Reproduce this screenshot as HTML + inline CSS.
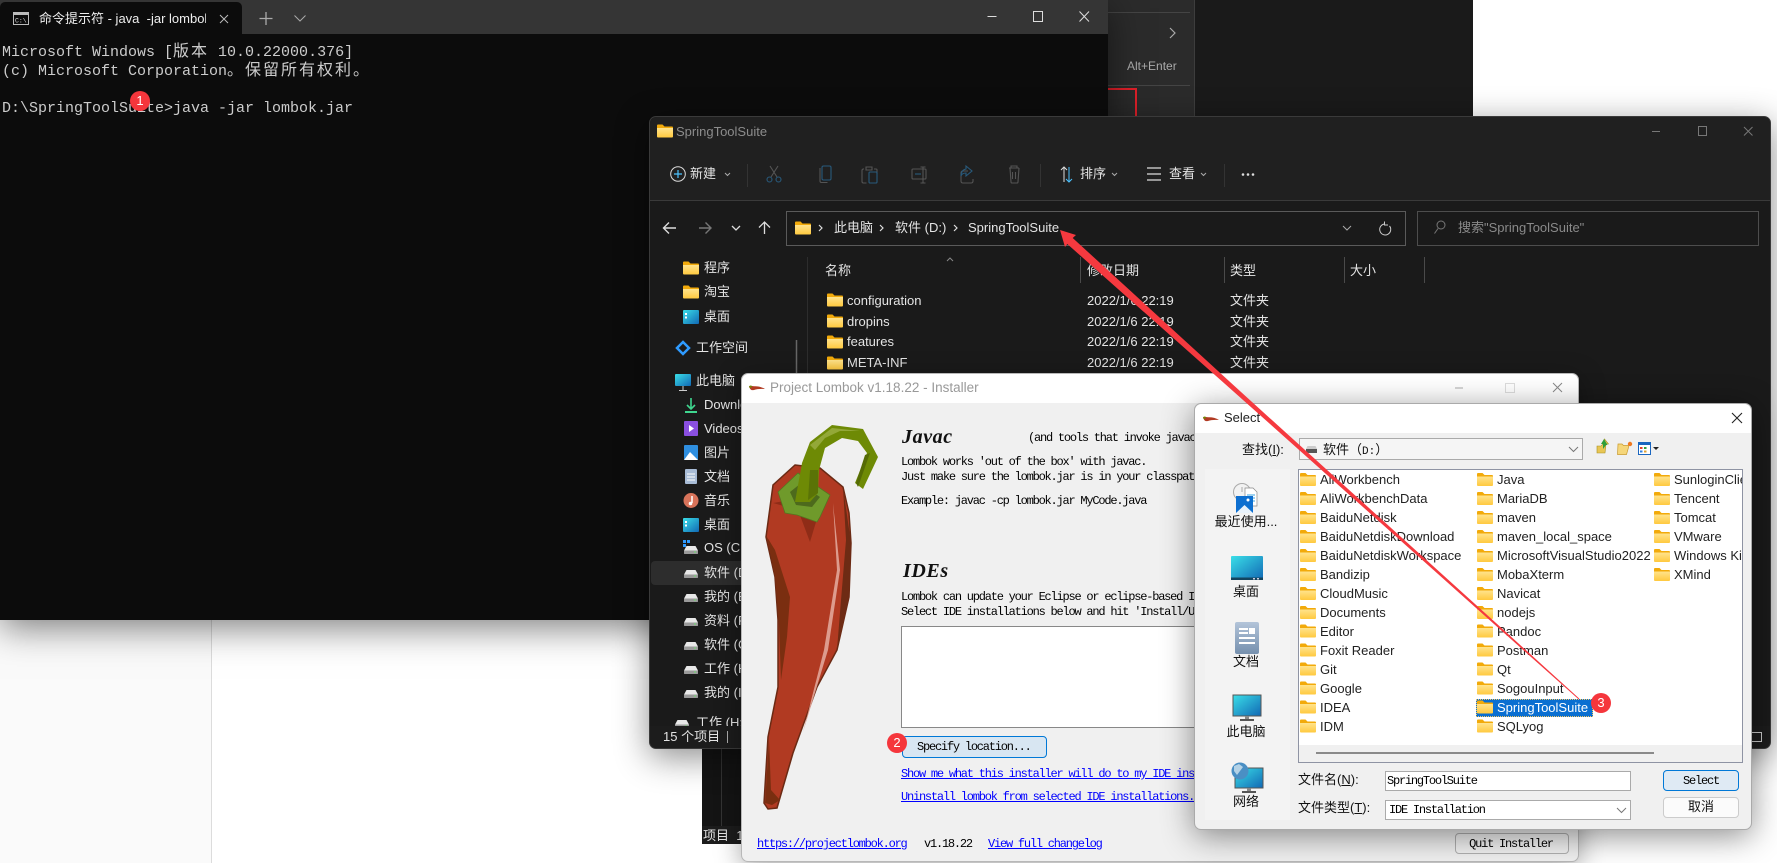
<!DOCTYPE html>
<html><head><meta charset="utf-8"><title>Lombok</title>
<style>
html,body{margin:0;padding:0;background:#fff}
body{position:relative;width:1777px;height:863px;overflow:hidden;font-family:"Liberation Sans","Noto Sans CJK SC",sans-serif;font-size:13px}
.b{position:absolute;box-sizing:border-box}
.t{position:absolute;white-space:nowrap;line-height:20px;margin-top:-10px}
.c{transform:translateX(-50%)}
.m{font-family:"Liberation Mono","Noto Sans CJK SC",monospace;font-size:12px;letter-spacing:-1.22px;color:#000}
.l{color:#00f;text-decoration:underline}
.e{color:#e4e4e4}
.d{color:#222}
.term{font-family:"Liberation Mono","Noto Sans CJK SC",monospace;font-size:15px;color:#cccccc}
.term span{font-size:16px;letter-spacing:2px}
.clip{position:absolute;left:0;top:0;width:1777px;height:863px}
svg{position:absolute;left:0;top:0;overflow:visible}
.badge{position:absolute;width:20px;height:20px;border-radius:50%;background:#f5363c;color:#fff;font-size:13px;line-height:20px;text-align:center}
</style></head><body>
<svg width="0" height="0" style="position:absolute"><defs>
<linearGradient id="fg" x1="0" y1="0" x2="0" y2="1"><stop offset="0" stop-color="#ffe38c"/><stop offset="1" stop-color="#ffc93f"/></linearGradient>
<linearGradient id="dg" x1="0" y1="0" x2="1" y2="1"><stop offset="0" stop-color="#3adfe8"/><stop offset="1" stop-color="#1168b4"/></linearGradient>
<linearGradient id="dc" x1="0" y1="0" x2="0" y2="1"><stop offset="0" stop-color="#b3c4d9"/><stop offset="1" stop-color="#7590ae"/></linearGradient>
<symbol id="f" viewBox="0 0 16 14"><path d="M0 1.5Q0 .5 1 .5h4.5l2 2H15q1 0 1 1V5H0z" fill="#f2aa0a"/><path d="M0 4h16v8.5q0 1-1 1H1q-1 0-1-1z" fill="url(#fg)"/></symbol>
<symbol id="drv" viewBox="0 0 14 10"><path d="M2.5 1h9L14 5.5H0z" fill="#e8e8e8"/><rect x="0" y="5.5" width="14" height="3.5" rx=".6" fill="#9a9a9a"/><rect x="10" y="6.5" width="2" height="1" fill="#6fe06f"/></symbol>
<symbol id="chili" viewBox="0 0 16 6"><path d="M0 1.5Q1 0 3 1l2 .3Q11 1 16 4 9 3.6 5 5 2 5.6 1 3.6z" fill="#b13a22"/><path d="M0 1.5Q1 0 3 1L2.6 2.6 0 2.4z" fill="#6e8a05"/></symbol>
<symbol id="dsk" viewBox="0 0 16 16"><rect y="1" width="16" height="14" rx="1" fill="url(#dg)"/><rect x="2" y="4" width="2" height="2" fill="#fff"/><rect x="2" y="7.5" width="2" height="2" fill="#fff"/></symbol>
</defs></svg>

<!-- background behind windows -->
<div class="b" style="left:0;top:620px;width:211px;height:243px;background:#fafafa"></div>
<div class="b" style="left:211px;top:620px;width:1px;height:243px;background:#dcdcdc"></div>
<div class="b" style="left:1108px;top:0;width:365px;height:120px;background:#1a1a1a"></div>
<div class="b" style="left:1108px;top:0;width:87px;height:120px;background:#2b2b2b;border-right:1px solid #3d3d3d"></div>
<div class="b" style="left:1108px;top:12px;width:82px;height:1px;background:#444"></div>
<div class="b" style="left:1108px;top:85px;width:82px;height:1px;background:#444"></div>
<div class="t" style="left:1127px;top:66px;color:#aaa;font-size:12px">Alt+Enter</div>
<svg width="1777" height="863"><path d="M1170 28l5 5-5 5" fill="none" stroke="#aaa" stroke-width="1.2"/></svg>
<div class="b" style="left:1107px;top:88px;width:30px;height:32px;border-top:2px solid #e0202a;border-right:2px solid #e0202a"></div>
<div class="b" style="left:702px;top:740px;width:45px;height:104px;background:#141414"></div>
<div class="b" style="left:721px;top:740px;width:1px;height:86px;background:#333"></div>
<div class="b" style="left:702px;top:826px;width:45px;height:18px;background:#1c1c1c"></div>
<div class="t e" style="left:703px;top:836px">项目 &nbsp;1</div>

<!-- terminal -->
<div class="b" style="left:0;top:0;width:1108px;height:620px;background:#0c0c0c;box-shadow:0 8px 34px rgba(0,0,0,.5)"></div>
<div class="b" style="left:0;top:0;width:1108px;height:34px;background:#353535"></div>
<div class="b" style="left:0;top:2px;width:242px;height:32px;background:#0c0c0c;border-radius:5px 5px 0 0"></div>
<svg width="1777" height="863">
<rect x="13.500" y="12.500" width="15" height="12" fill="#0c0c0c" stroke="#bbb"/><rect x="13.500" y="12.500" width="15" height="2.500" fill="#bbb"/>
<text x="15" y="22.500" font-family="Liberation Mono" font-size="6.500" fill="#ddd">C:\</text>
<path d="M220 15l8 8M228 15l-8 8" stroke="#bbb" fill="none"/>
<path d="M266 12v13M259.500 18.500h13" stroke="#aaa" stroke-width="1.300" fill="none"/>
<path d="M294.500 15.500l5.500 5.500 5.500-5.500" stroke="#aaa" fill="none"/>
<path d="M987.500 16.500h9" stroke="#ddd"/><rect x="1033.500" y="11.500" width="9" height="10" fill="none" stroke="#ddd"/>
<path d="M1079.500 11.500l9.500 10M1089 11.500l-9.500 10" stroke="#ddd" fill="none"/>
</svg>
<div class="t" style="left:39px;top:19px;width:167px;overflow:hidden;color:#eee;font-size:13px">命令提示符 - java &nbsp;-jar lombok.jar</div>
<div class="t term" style="left:2px;top:52px">Microsoft Windows [<span>版本</span> 10.0.22000.376]</div>
<div class="t term" style="left:2px;top:71px">(c) Microsoft Corporation<span>。保留所有权利。</span></div>
<div class="t term" style="left:2px;top:109px">D:\SpringToolSuite&gt;java -jar lombok.jar</div>

<!-- explorer -->
<div class="b" style="left:649px;top:116px;width:1122px;height:633px;background:#1a1a1a;border-radius:7px;border:1px solid #3a3a3a;box-shadow:0 8px 34px rgba(0,0,0,.45)"></div>
<div class="b" style="left:650px;top:117px;width:1120px;height:83px;background:#202020;border-radius:7px 7px 0 0"></div>
<div class="b" style="left:650px;top:200px;width:1120px;height:1px;background:#3a3a3a"></div>
<div class="t" style="left:676px;top:132px;color:#8c8c8c">SpringToolSuite</div>
<div class="t e" style="left:690px;top:174px">新建</div>
<div class="t e" style="left:1080px;top:174px">排序</div>
<div class="t e" style="left:1169px;top:174px">查看</div>
<div class="b" style="left:786px;top:211px;width:620px;height:35px;border:1px solid #5a5a5a"></div>
<div class="b" style="left:1417px;top:211px;width:342px;height:35px;border:1px solid #4d4d4d"></div>
<div class="t e" style="left:834px;top:228px">此电脑</div>
<div class="t e" style="left:895px;top:228px">软件 (D:)</div>
<div class="t e" style="left:968px;top:228px">SpringToolSuite</div>
<div class="t" style="left:1458px;top:228px;color:#8a8a8a">搜索"SpringToolSuite"</div>
<svg width="1777" height="863">
<use href="#f" x="657" y="124" width="16" height="14"/>
<path d="M1652 131.500h8" stroke="#777"/><rect x="1698.500" y="126.500" width="8" height="9" fill="none" stroke="#777"/><path d="M1744 127l8.500 8.500M1752.500 127l-8.500 8.500" stroke="#777" fill="none"/>
<circle cx="678" cy="174" r="7.300" fill="none" stroke="#ddd"/><path d="M678 170v8M674 174h8" stroke="#4cc2ff" stroke-width="1.200"/>
<path d="M725 173l2.500 2.500 2.500-2.500M1112 173l2.500 2.500 2.500-2.500M1201 173l2.500 2.500 2.500-2.500" stroke="#aaa" fill="none"/>
<path d="M747.500 164v23M1040.500 164v23M1224.500 164v23" stroke="#333"/>
<g fill="none" stroke="#555" stroke-width="1.100">
<path d="M770 166l7 11M778 166l-7 11"/>
<path d="M820 168v13a1.500 1.500 0 0 0 1.500 1.500h6"/>
<path d="M864 169h-0.500q-1.500 0-1.500 1.500v11q0 1.500 1.500 1.500h3M874 169h2q1 0 1 1v4M866 167h6v3h-6z"/>
<path d="M923 167v16M920.500 167h5M920.500 183h5"/>
<path d="M968 171h-5q-2 0-2 2v8q0 2 2 2h8q2 0 2-2v-2"/>
<path d="M1009 168h10M1011 168v-2h6v2M1010 168l1 14q0 1 1 1h5q1 0 1-1l1-14M1012.500 172v7M1015.500 172v7"/>
</g>
<g fill="none" stroke="#285a7c" stroke-width="1.100">
<circle cx="769.500" cy="179.500" r="2.500"/><circle cx="778.500" cy="179.500" r="2.500"/>
<rect x="822" y="166" width="9" height="14" rx="1.500"/>
<rect x="869" y="172" width="8" height="11" rx="1"/>
<rect x="912" y="169" width="14" height="10" rx="1" stroke="#555"/><path d="M915 174h6"/>
<path d="M966 166l6 5-6 5v-3q-4 0-5 3 0-6 5-7z"/>
</g>
<path d="M1064 167v15M1061 170l3-3 3 3" stroke="#ddd" fill="none"/><path d="M1069 167v15M1066 179l3 3 3-3" stroke="#4cc2ff" fill="none"/>
<path d="M1147 168h14M1147 174h14M1147 180h14" stroke="#ddd" stroke-width="1.200"/>
<circle cx="1243" cy="174.500" r="1.300" fill="#ddd"/><circle cx="1248" cy="174.500" r="1.300" fill="#ddd"/><circle cx="1253" cy="174.500" r="1.300" fill="#ddd"/>
<path d="M676 228h-12M669 222.500l-5.500 5.500 5.500 5.500" stroke="#ddd" stroke-width="1.400" fill="none"/>
<path d="M699 228h12M705.500 222.500l5.500 5.500-5.500 5.500" stroke="#777" stroke-width="1.400" fill="none"/>
<path d="M732 226l4 4 4-4" stroke="#ddd" stroke-width="1.300" fill="none"/>
<path d="M764.500 234v-12M759 227.500l5.500-5.500 5.500 5.500" stroke="#ddd" stroke-width="1.300" fill="none"/>
<use href="#f" x="795" y="221" width="16" height="14"/>
<path d="M819 225l3 3-3 3M880 225l3 3-3 3M954 225l3 3-3 3" stroke="#ddd" stroke-width="1.200" fill="none"/>
<path d="M1343 226l4 4 4-4" stroke="#aaa" fill="none"/>
<path d="M1389.500 226a5.500 5.500 0 1 1-5-2M1384.500 221.500v3.500h3.500" stroke="#ccc" fill="none"/>
<circle cx="1441" cy="225" r="4" fill="none" stroke="#777"/><path d="M1438 228.500l-3.500 5" stroke="#777"/>
<path d="M947 261l3-3 3 3" stroke="#888" fill="none"/>
<path d="M807.500 257v120" stroke="#2d2d2d"/><path d="M796.500 340v40" stroke="#666" stroke-width="1.500"/>
<path d="M1080.500 257v26M1224.500 257v26M1344.500 257v26M1424.500 257v26" stroke="#4a4a4a"/>
<use href="#f" x="827" y="293" width="16" height="14"/><use href="#f" x="827" y="314" width="16" height="14"/><use href="#f" x="827" y="335" width="16" height="14"/><use href="#f" x="827" y="356" width="16" height="14"/>
<use href="#f" x="683" y="261" width="16" height="14"/><use href="#f" x="683" y="285" width="16" height="14"/><use href="#dsk" x="683" y="309" width="16" height="16"/>
<path d="M683 342l6 6-6 6-6-6z" fill="none" stroke="#2f9bff" stroke-width="2.500"/>
<rect x="675" y="374" width="16" height="12" rx="1" fill="url(#dg)"/><path d="M683 386v4M679 390.500h8" stroke="#ccc"/>
<path d="M691 398v11M687 405l4 4 4-4" stroke="#3fd68f" stroke-width="1.600" fill="none"/><path d="M685 412h12" stroke="#3fd68f" stroke-width="2"/>
<rect x="684" y="421" width="14" height="15" rx="1" fill="#8a4fe0"/><path d="M689 425v7l5-3.500z" fill="#fff"/>
<rect x="684" y="445" width="14" height="15" rx="1" fill="#2f8fe0"/><path d="M684 460l6-8 8 8z" fill="#fff"/>
<rect x="685" y="469" width="12" height="15" rx="1" fill="#a8bcd6"/><path d="M687 474h8M687 477h8M687 480h8" stroke="#fff"/>
<circle cx="691" cy="500.500" r="7.500" fill="#d8735a"/><path d="M692 496v7" stroke="#fff" stroke-width="1.500"/><circle cx="690.500" cy="503.500" r="1.800" fill="#fff"/>
<use href="#dsk" x="683" y="517" width="16" height="16"/>
<rect x="683" y="540" width="3" height="3" fill="#2f9bff"/><rect x="687" y="540" width="3" height="3" fill="#2f9bff"/><rect x="683" y="544" width="3" height="3" fill="#2f9bff"/>
</svg>
<div class="b" style="left:651px;top:561px;width:95px;height:24px;background:#2d2d2d;border-radius:4px"></div>
<svg width="1777" height="863">
<use href="#drv" x="684" y="545" width="14" height="10"/><use href="#drv" x="684" y="569" width="14" height="10"/><use href="#drv" x="684" y="593" width="14" height="10"/><use href="#drv" x="684" y="617" width="14" height="10"/><use href="#drv" x="684" y="641" width="14" height="10"/><use href="#drv" x="684" y="665" width="14" height="10"/><use href="#drv" x="684" y="689" width="14" height="10"/><use href="#drv" x="675" y="719" width="14" height="10"/>
</svg>
<div class="t e" style="left:704px;top:268px">程序</div><div class="t e" style="left:704px;top:292px">淘宝</div><div class="t e" style="left:704px;top:317px">桌面</div>
<div class="t e" style="left:696px;top:348px">工作空间</div><div class="t e" style="left:696px;top:381px">此电脑</div>
<div class="t e" style="left:704px;top:405px">Downloads</div><div class="t e" style="left:704px;top:429px">Videos</div><div class="t e" style="left:704px;top:453px">图片</div><div class="t e" style="left:704px;top:477px">文档</div><div class="t e" style="left:704px;top:501px">音乐</div><div class="t e" style="left:704px;top:525px">桌面</div>
<div class="t e" style="left:704px;top:548px">OS (C:)</div><div class="t e" style="left:704px;top:573px">软件 (D:)</div><div class="t e" style="left:704px;top:597px">我的 (E:)</div><div class="t e" style="left:704px;top:621px">资料 (F:)</div><div class="t e" style="left:704px;top:645px">软件 (G:)</div><div class="t e" style="left:704px;top:669px">工作 (H:)</div><div class="t e" style="left:704px;top:693px">我的 (I:)</div><div class="t e" style="left:696px;top:723px">工作 (H:)</div>
<div class="t e" style="left:825px;top:271px">名称</div><div class="t e" style="left:1087px;top:271px">修改日期</div><div class="t e" style="left:1230px;top:271px">类型</div><div class="t e" style="left:1350px;top:271px">大小</div>
<div class="t e" style="left:847px;top:301px">configuration</div><div class="t e" style="left:847px;top:322px">dropins</div><div class="t e" style="left:847px;top:342px">features</div><div class="t e" style="left:847px;top:363px">META-INF</div>
<div class="t e" style="left:1087px;top:301px">2022/1/6 22:19</div><div class="t e" style="left:1087px;top:322px">2022/1/6 22:19</div><div class="t e" style="left:1087px;top:342px">2022/1/6 22:19</div><div class="t e" style="left:1087px;top:363px">2022/1/6 22:19</div>
<div class="t e" style="left:1230px;top:301px">文件夹</div><div class="t e" style="left:1230px;top:322px">文件夹</div><div class="t e" style="left:1230px;top:342px">文件夹</div><div class="t e" style="left:1230px;top:363px">文件夹</div>
<div class="b" style="left:650px;top:726px;width:1120px;height:22px;background:#1c1c1c;border-radius:0 0 7px 7px"></div>
<div class="t e" style="left:663px;top:737px">15 个项目</div>
<div class="b" style="left:727px;top:731px;width:1px;height:12px;background:#aaa"></div>
<svg width="1777" height="863"><rect x="1751.500" y="732.500" width="10" height="9" fill="none" stroke="#ccc"/></svg>

<!-- lombok installer -->
<div class="b" style="left:741px;top:373px;width:838px;height:489px;background:#f0f0f0;border-radius:7px;border:1px solid #b8b8b8;box-shadow:0 6px 26px rgba(0,0,0,.35)"></div>
<div class="b" style="left:742px;top:374px;width:836px;height:29px;background:#fff;border-radius:7px 7px 0 0"></div>
<svg width="1777" height="863"><use href="#chili" x="749" y="385" width="16" height="6"/>
<path d="M1455 388h8" stroke="#aaa"/><rect x="1505.500" y="383.500" width="9" height="9" fill="none" stroke="#ddd"/><path d="M1553 383l9 9M1562 383l-9 9" stroke="#888" fill="none"/></svg>
<div class="t" style="left:770px;top:388px;color:#999;font-size:13.500px">Project Lombok v1.18.22 - Installer</div>

<svg width="1777" height="863">
<path d="M795 465L820 468 843 487 849 513 851 543 849 597 837 650 817 687 793 753 777 808 768 809 764 803 768 737 778 687 778 620 775 577 766 537 773 485Z" fill="#b13a22" stroke="#6b2a14" stroke-width="1.500"/>
<path d="M767 537L775 550 790 597 787 637 781 680 779 625 775 577Z" fill="#7a2e10"/>
<path d="M843 487L851 543 849 597 837 650 841 600 846 540Z" fill="#6e2b14"/>
<path d="M833 503L840 570 828 650 803 732 824 650 837 570Z" fill="#dd9b8d"/>
<path d="M773 503L798 510 810 542 816 522 825 505 790 500Z" fill="#8f2c17"/>
<path d="M769 740L765 803 772 805 780 800 771 790Z" fill="#7a2e10"/>
<path d="M778 492L798 473 830 495 820 517 817 522 797 515 785 513Z" fill="#6f9a2b" stroke="#55761f" stroke-width=".8"/>
<path d="M790 492L800 484 820 497 812 507 796 505Z" fill="#4d6a1c"/>
<path d="M795 502L802 463 810 442 832 425 863 429 878 457 863 489 855 483 867 453 858 441 842 438 825 448 819 470 818 493 810 502Z" fill="#6e8a05"/>
<path d="M810 445L832 428 860 431 840 431 825 438 815 450Z" fill="#93a838"/>
<path d="M865 455L870 453 858 487 856 483Z" fill="#556b05"/>
<path d="M810 470L818 470 818 493 808 500Z" fill="#5a7306"/>
</svg>
<div class="t" style="left:902px;top:437px;font-family:'Liberation Serif',serif;font-weight:bold;font-style:italic;font-size:20px;letter-spacing:.6px;color:#111">Javac</div>
<div class="t m" style="left:1028px;top:438px">(and tools that invoke javac)</div>
<div class="t m" style="left:901px;top:462px">Lombok works 'out of the box' with javac.</div>
<div class="t m" style="left:901px;top:477px">Just make sure the lombok.jar is in your classpath.</div>
<div class="t m" style="left:901px;top:501px">Example: javac -cp lombok.jar MyCode.java</div>
<div class="t" style="left:903px;top:571px;font-family:'Liberation Serif',serif;font-weight:bold;font-style:italic;font-size:20px;letter-spacing:.6px;color:#111">IDEs</div>
<div class="t m" style="left:901px;top:597px">Lombok can update your Eclipse or eclipse-based IDE.</div>
<div class="t m" style="left:901px;top:612px">Select IDE installations below and hit 'Install/Update'.</div>
<div class="b" style="left:901px;top:626px;width:400px;height:102px;background:#fff;border:1px solid #888"></div>
<div class="b" style="left:902px;top:736px;width:145px;height:22px;background:#d8e6f2;border:1px solid #0078d7;border-radius:4px"></div>
<div class="t m" style="left:917px;top:747px">Specify location...</div>
<div class="t m l" style="left:901px;top:774px">Show me what this installer will do to my IDE installation.</div>
<div class="t m l" style="left:901px;top:797px">Uninstall lombok from selected IDE installations.</div>
<div class="t m l" style="left:757px;top:844px">https://projectlombok.org</div>
<div class="t m" style="left:924px;top:844px">v1.18.22</div>
<div class="t m l" style="left:988px;top:844px">View full changelog</div>
<div class="b" style="left:1455px;top:833px;width:114px;height:21px;background:#f2f2f2;border:1px solid #b0b0b0;border-radius:4px"></div>
<div class="t m c" style="left:1511px;top:844px">Quit Installer</div>

<!-- select dialog -->
<div class="b" style="left:1194px;top:403px;width:558px;height:427px;background:#f0f0f0;border-radius:7px;border:1px solid #aaa;box-shadow:0 6px 32px rgba(0,0,0,.45)"></div>
<div class="b" style="left:1195px;top:404px;width:556px;height:29px;background:#fff;border-radius:7px 7px 0 0"></div>
<svg width="1777" height="863"><use href="#chili" x="1203" y="416" width="16" height="6"/>
<path d="M1732 413l10 10M1742 413l-10 10" stroke="#222" stroke-width="1.100" fill="none"/></svg>
<div class="t" style="left:1224px;top:418px;color:#222">Select</div>
<div class="t" style="left:1242px;top:450px;color:#111">查找(<u>I</u>):</div>
<div class="b" style="left:1299px;top:438px;width:284px;height:22px;background:#f5f5f5;border:1px solid #aaa"></div>
<svg width="1777" height="863"><rect x="1306" y="449" width="11" height="4" fill="#555"/><path d="M1307.500 446h8l1.500 3h-11z" fill="#ccc"/>
<path d="M1569 447l4.500 4.500 4.500-4.500" stroke="#777" fill="none"/>
<path d="M1597 446h4l3-3 .5-4 4 5h-2.500l-1 9h-8z" fill="#e8c654" stroke="#a98f20" stroke-width=".6"/><path d="M1604 439l-3 5 2 0 0 5 3-4h1.500z" fill="#2e9e3a"/>
<path d="M1618 444h4l1.500 1.500h5v2l-2 7h-9z" fill="#f5d67a" stroke="#c99a2c" stroke-width=".7"/><circle cx="1630" cy="444" r="2.200" fill="#f07a20"/>
<rect x="1638.500" y="442.500" width="12" height="12" fill="#fff" stroke="#1a66c0"/><rect x="1638.500" y="442.500" width="12" height="2.500" fill="#1a66c0"/><rect x="1640" y="447" width="2.500" height="2" fill="#e04030"/><rect x="1644" y="447" width="2.500" height="2" fill="#30a040"/><rect x="1640" y="450.500" width="2.500" height="2" fill="#3080e0"/><rect x="1644" y="450.500" width="2.500" height="2" fill="#e0a030"/><path d="M1653 447h6l-3 3z" fill="#222"/></svg>
<div class="t" style="left:1323px;top:450px;color:#111">软件（<span style="font-family:'Liberation Mono',monospace;font-size:11px">D:</span>）</div>
<div class="b" style="left:1205px;top:469px;width:85px;height:351px;background:#f3f3f3"></div>
<svg width="1777" height="863">
<circle cx="1242" cy="492" r="8.500" fill="#f2f2f2" stroke="#aaa"/><path d="M1242 487v5" stroke="#aaa"/>
<path d="M1245 488h8l4 4v14h-12z" fill="#fff" stroke="#888" stroke-width=".7"/><path d="M1247 495h8M1247 498h8M1247 501h8" stroke="#3ba5e0"/>
<rect x="1236" y="496" width="17" height="17" fill="#0d6fd0"/><path d="M1236 513l8.500-8 8.500 8z" fill="#e8f2fb"/><circle cx="1248" cy="500" r="1.500" fill="#fff"/>
<rect x="1231" y="556" width="32" height="24" rx="1" fill="url(#dg)"/><rect x="1231" y="577.500" width="32" height="2.500" fill="#13445e"/><rect x="1253" y="578" width="2" height="1.500" fill="#ccd"/><rect x="1257" y="578" width="2" height="1.500" fill="#ccd"/>
<rect x="1235" y="622" width="24" height="32" rx="2" fill="url(#dc)"/><rect x="1239" y="628" width="9" height="2" fill="#fff"/><rect x="1239" y="632" width="9" height="2" fill="#fff"/><rect x="1249" y="628" width="6" height="6" fill="#fff"/><rect x="1239" y="637" width="16" height="2" fill="#fff"/><rect x="1239" y="642" width="16" height="2" fill="#fff"/>
<rect x="1233" y="695" width="28" height="21" fill="url(#dg)" stroke="#555"/><rect x="1245" y="716" width="4" height="3" fill="#888"/><rect x="1240" y="719" width="14" height="2" fill="#555"/>
<rect x="1235" y="768" width="28" height="20" fill="url(#dg)" stroke="#555"/><rect x="1247" y="788" width="4" height="3" fill="#888"/><rect x="1242" y="791" width="14" height="2" fill="#555"/>
<circle cx="1240" cy="771" r="8.500" fill="#4a8fc4"/><path d="M1234 766l5-2 4 3-3 4-3 4-3-4z" fill="#b4d2e6"/>
</svg>
<div class="t d c" style="left:1246px;top:522px;color:#111">最近使用...</div>
<div class="t d c" style="left:1246px;top:592px;color:#111">桌面</div>
<div class="t d c" style="left:1246px;top:662px;color:#111">文档</div>
<div class="t d c" style="left:1246px;top:732px;color:#111">此电脑</div>
<div class="t d c" style="left:1246px;top:802px;color:#111">网络</div>

<div class="b" style="left:1298px;top:469px;width:445px;height:294px;background:#fff;border:1px solid #8e93a3"></div>
<div class="b" style="left:1299px;top:745px;width:443px;height:17px;background:#f0f0f0"></div>
<div class="b" style="left:1316px;top:752px;width:338px;height:2px;background:#8a8a8a"></div>
<div class="b" style="left:1476px;top:699px;width:117px;height:18px;background:#0a6fd1;outline:1px dotted #f6c867;outline-offset:-1px"></div>
<svg width="1777" height="863"><defs><clipPath id="lc"><rect x="1299" y="470" width="443" height="275"/></clipPath></defs>
<g clip-path="url(#lc)">
<use href="#f" x="1300" y="472.500" width="16" height="14"/><use href="#f" x="1300" y="491.500" width="16" height="14"/><use href="#f" x="1300" y="510.500" width="16" height="14"/><use href="#f" x="1300" y="529.500" width="16" height="14"/><use href="#f" x="1300" y="548.500" width="16" height="14"/><use href="#f" x="1300" y="567.500" width="16" height="14"/><use href="#f" x="1300" y="586.500" width="16" height="14"/><use href="#f" x="1300" y="605.500" width="16" height="14"/><use href="#f" x="1300" y="624" width="16" height="14"/><use href="#f" x="1300" y="643" width="16" height="14"/><use href="#f" x="1300" y="662" width="16" height="14"/><use href="#f" x="1300" y="681" width="16" height="14"/><use href="#f" x="1300" y="700" width="16" height="14"/><use href="#f" x="1300" y="719" width="16" height="14"/>
<use href="#f" x="1477" y="472.500" width="16" height="14"/><use href="#f" x="1477" y="491.500" width="16" height="14"/><use href="#f" x="1477" y="510.500" width="16" height="14"/><use href="#f" x="1477" y="529.500" width="16" height="14"/><use href="#f" x="1477" y="548.500" width="16" height="14"/><use href="#f" x="1477" y="567.500" width="16" height="14"/><use href="#f" x="1477" y="586.500" width="16" height="14"/><use href="#f" x="1477" y="605.500" width="16" height="14"/><use href="#f" x="1477" y="624" width="16" height="14"/><use href="#f" x="1477" y="643" width="16" height="14"/><use href="#f" x="1477" y="662" width="16" height="14"/><use href="#f" x="1477" y="681" width="16" height="14"/><use href="#f" x="1477" y="700" width="16" height="14"/><use href="#f" x="1477" y="719" width="16" height="14"/>
<use href="#f" x="1654" y="472.500" width="16" height="14"/><use href="#f" x="1654" y="491.500" width="16" height="14"/><use href="#f" x="1654" y="510.500" width="16" height="14"/><use href="#f" x="1654" y="529.500" width="16" height="14"/><use href="#f" x="1654" y="548.500" width="16" height="14"/><use href="#f" x="1654" y="567.500" width="16" height="14"/>
</g></svg>
<div class="clip" style="clip-path:inset(470px 35px 118px 1299px)">
<div class="t d" style="left:1320px;top:480px">AliWorkbench</div><div class="t d" style="left:1320px;top:499px">AliWorkbenchData</div><div class="t d" style="left:1320px;top:518px">BaiduNetdisk</div><div class="t d" style="left:1320px;top:537px">BaiduNetdiskDownload</div><div class="t d" style="left:1320px;top:556px">BaiduNetdiskWorkspace</div><div class="t d" style="left:1320px;top:575px">Bandizip</div><div class="t d" style="left:1320px;top:594px">CloudMusic</div><div class="t d" style="left:1320px;top:613px">Documents</div><div class="t d" style="left:1320px;top:632px">Editor</div><div class="t d" style="left:1320px;top:651px">Foxit Reader</div><div class="t d" style="left:1320px;top:670px">Git</div><div class="t d" style="left:1320px;top:689px">Google</div><div class="t d" style="left:1320px;top:708px">IDEA</div><div class="t d" style="left:1320px;top:727px">IDM</div>
<div class="t d" style="left:1497px;top:480px">Java</div><div class="t d" style="left:1497px;top:499px">MariaDB</div><div class="t d" style="left:1497px;top:518px">maven</div><div class="t d" style="left:1497px;top:537px">maven_local_space</div><div class="t d" style="left:1497px;top:556px">MicrosoftVisualStudio2022</div><div class="t d" style="left:1497px;top:575px">MobaXterm</div><div class="t d" style="left:1497px;top:594px">Navicat</div><div class="t d" style="left:1497px;top:613px">nodejs</div><div class="t d" style="left:1497px;top:632px">Pandoc</div><div class="t d" style="left:1497px;top:651px">Postman</div><div class="t d" style="left:1497px;top:670px">Qt</div><div class="t d" style="left:1497px;top:689px">SogouInput</div><div class="t" style="left:1497px;top:708px;color:#fff">SpringToolSuite</div><div class="t d" style="left:1497px;top:727px">SQLyog</div>
<div class="t d" style="left:1674px;top:480px">SunloginClient</div><div class="t d" style="left:1674px;top:499px">Tencent</div><div class="t d" style="left:1674px;top:518px">Tomcat</div><div class="t d" style="left:1674px;top:537px">VMware</div><div class="t d" style="left:1674px;top:556px">Windows Kits</div><div class="t d" style="left:1674px;top:575px">XMind</div>
</div>
<div class="t" style="left:1298px;top:780px;color:#111">文件名(<u>N</u>):</div>
<div class="t" style="left:1298px;top:808px;color:#111">文件类型(<u>T</u>):</div>
<div class="b" style="left:1385px;top:771px;width:246px;height:20px;background:#fff;border:1px solid #aaa"></div>
<div class="t m" style="left:1387px;top:781px">SpringToolSuite</div>
<div class="b" style="left:1385px;top:800px;width:246px;height:20px;background:#fff;border:1px solid #aaa"></div>
<div class="t m" style="left:1389px;top:810px">IDE Installation</div>
<svg width="1777" height="863"><path d="M1617 808l4.500 4.500 4.500-4.500" stroke="#777" fill="none"/></svg>
<div class="b" style="left:1663px;top:770px;width:76px;height:21px;background:#dfeaf4;border:1px solid #0078d7;border-radius:4px"></div>
<div class="t m c" style="left:1701px;top:781px">Select</div>
<div class="b" style="left:1663px;top:797px;width:76px;height:21px;background:#fbfbfb;border:1px solid #ccc;border-radius:4px"></div>
<div class="t c" style="left:1701px;top:807px;color:#111">取消</div>

<!-- annotations -->
<svg width="1777" height="863">
<path d="M1060 230L1076 235 1072.700 238 1243.500 394.300 1500.700 627.300 1579.300 698.600 1578.700 699.400 1499.300 628.700 1240.500 397.700 1067.300 244 1065 247Z" fill="#f5393f"/>
</svg>
<div class="badge" style="left:130px;top:91px">1</div>
<div class="badge" style="left:887px;top:733px">2</div>
<div class="badge" style="left:1591px;top:693px">3</div>
</body></html>
